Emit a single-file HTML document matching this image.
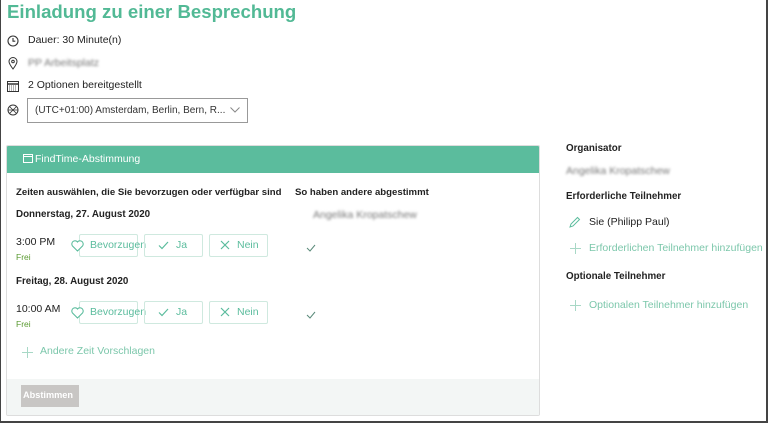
<!DOCTYPE html>
<html><head><meta charset="utf-8"><style>
*{margin:0;padding:0;box-sizing:border-box}
body{width:768px;height:423px;overflow:hidden;background:#fff;font-family:"Segoe UI","Liberation Sans",sans-serif;font-size:10.5px;color:#222;position:relative}
.frame{position:absolute;left:0;top:0;width:768px;height:423px;border-left:1px solid #444;border-right:2px solid #444;border-bottom:2px solid #444}
.a{position:absolute;white-space:nowrap}
h1{position:absolute;left:7px;top:1px;font-size:18.6px;font-weight:bold;color:#52b995}
.blur{filter:blur(1.3px);color:#777}
.card{position:absolute;left:6px;top:145px;width:534px;height:271px;border:1px solid #ddd;border-radius:2px;overflow:hidden}
.hdr{height:27px;background:#5bbc9d;color:#fff;font-size:10.5px;padding:7px 0 0 16px}
.foot{position:absolute;left:0;bottom:0;width:100%;height:36px;background:#f3f6f5}
.btn{position:absolute;height:23px;border:1px solid #cfe9df;border-radius:2px;color:#5bbc9d;font-size:10.5px;padding-top:4px}
.green{color:#5bbc9d}
.s{font-weight:bold;font-size:9.8px}
</style></head><body>
<h1>Einladung zu einer Besprechung</h1>
<svg class="a" style="left:7px;top:35px" width="12" height="12" viewBox="0 0 12 12"><circle cx="6" cy="6" r="5" fill="none" stroke="#333" stroke-width="1.1"/><path d="M6 3v3.2h2.3" fill="none" stroke="#333" stroke-width="1.1"/></svg>
<div class="a" style="left:28px;top:34px">Dauer: 30 Minute(n)</div>
<svg class="a" style="left:8px;top:57px" width="10" height="13" viewBox="0 0 10 13"><path d="M5 12C2 8 1 6 1 4.5a4 4 0 0 1 8 0C9 6 8 8 5 12z" fill="none" stroke="#333"/><circle cx="5" cy="4.5" r="1.3" fill="none" stroke="#333"/></svg>
<div class="a blur" style="left:28px;top:57px">PP Arbeitsplatz</div>
<svg class="a" style="left:7px;top:80px" width="12" height="12" viewBox="0 0 12 12"><rect x="0.5" y="1.5" width="11" height="10" fill="none" stroke="#333"/><path d="M0.5 4h11" stroke="#333" stroke-width="1.5"/><path d="M2 6h8M2 8h8M2 10h8" stroke="#333" stroke-width=".7" stroke-dasharray="1 1"/></svg>
<div class="a" style="left:28px;top:79px">2 Optionen bereitgestellt</div>
<svg class="a" style="left:7px;top:104px" width="12" height="12" viewBox="0 0 12 12"><circle cx="6" cy="6" r="5" fill="none" stroke="#333"/><path d="M3 3l6 6M9 3L3 9M1 6h10" stroke="#333" stroke-width=".8"/></svg>
<div class="a" style="left:27px;top:98px;width:221px;height:25px;border:1px solid #999;padding:6px 0 0 7px;color:#333;font-size:10px">(UTC+01:00) Amsterdam, Berlin, Bern, R...</div>
<svg class="a" style="left:230px;top:107px" width="10" height="6" viewBox="0 0 10 6"><path d="M0.5 0.5l4.5 4.5 4.5-4.5" fill="none" stroke="#888"/></svg>

<div class="card">
<div class="hdr"><svg style="vertical-align:-1px;margin-right:2px" width="10" height="10" viewBox="0 0 10 10"><rect x=".5" y="1.5" width="9" height="8" fill="none" stroke="#fff"/><path d="M.5 3.5h9" stroke="#fff"/></svg>FindTime-Abstimmung</div>
<div class="a s" style="left:9px;top:41px;font-size:9.6px">Zeiten auswählen, die Sie bevorzugen oder verfügbar sind</div>
<div class="a s" style="left:288px;top:41px;font-size:9.6px">So haben andere abgestimmt</div>
<div class="a s" style="left:9px;top:63px">Donnerstag, 27. August 2020</div>
<div class="a blur" style="left:306px;top:63px">Angelika Kropatschew</div>
<div class="a" style="left:9px;top:90px">3:00 PM</div>
<div class="a" style="left:9px;top:106px;font-size:8.5px;color:#5a9a30">Frei</div>
<div class="btn" style="left:72px;top:88px;width:59px;padding-left:10px">Bevorzugen</div>
<svg class="a" style="left:64px;top:94px" width="13" height="12" viewBox="0 0 13 12"><path d="M6.5 11L1.5 6A3 3 0 0 1 6.5 2 3 3 0 0 1 11.5 6z" fill="#fff" stroke="#5bbc9d" stroke-width="1.1"/></svg>
<div class="btn" style="left:137px;top:88px;width:59px;padding-left:31px">Ja</div>
<svg class="a" style="left:151px;top:95px" width="11" height="9" viewBox="0 0 11 9"><path d="M1 4.5l3 3L10 1" fill="none" stroke="#5bbc9d" stroke-width="1.2"/></svg>
<div class="btn" style="left:202px;top:88px;width:59px;padding-left:27px">Nein</div>
<svg class="a" style="left:213px;top:94px" width="10" height="10" viewBox="0 0 10 10"><path d="M1 1l8 8M9 1L1 9" stroke="#5bbc9d" stroke-width="1.2"/></svg>
<svg class="a" style="left:299px;top:98px" width="10" height="8" viewBox="0 0 10 8"><path d="M1 4l3 3L9 1" fill="none" stroke="#5a8a7a" stroke-width="1"/></svg>

<div class="a s" style="left:9px;top:130px">Freitag, 28. August 2020</div>
<div class="a" style="left:9px;top:157px">10:00 AM</div>
<div class="a" style="left:9px;top:173px;font-size:8.5px;color:#5a9a30">Frei</div>
<div class="btn" style="left:72px;top:155px;width:59px;padding-left:10px">Bevorzugen</div>
<svg class="a" style="left:64px;top:161px" width="13" height="12" viewBox="0 0 13 12"><path d="M6.5 11L1.5 6A3 3 0 0 1 6.5 2 3 3 0 0 1 11.5 6z" fill="#fff" stroke="#5bbc9d" stroke-width="1.1"/></svg>
<div class="btn" style="left:137px;top:155px;width:59px;padding-left:31px">Ja</div>
<svg class="a" style="left:151px;top:162px" width="11" height="9" viewBox="0 0 11 9"><path d="M1 4.5l3 3L10 1" fill="none" stroke="#5bbc9d" stroke-width="1.2"/></svg>
<div class="btn" style="left:202px;top:155px;width:59px;padding-left:27px">Nein</div>
<svg class="a" style="left:213px;top:161px" width="10" height="10" viewBox="0 0 10 10"><path d="M1 1l8 8M9 1L1 9" stroke="#5bbc9d" stroke-width="1.2"/></svg>
<svg class="a" style="left:299px;top:165px" width="10" height="8" viewBox="0 0 10 8"><path d="M1 4l3 3L9 1" fill="none" stroke="#5a8a7a" stroke-width="1"/></svg>

<svg class="a" style="left:15px;top:201px" width="11" height="11" viewBox="0 0 11 11"><path d="M5.5 0v11M0 5.5h11" stroke="#a8d8c6"/></svg>
<div class="a" style="left:33px;top:199px;color:#7cc7ab">Andere Zeit Vorschlagen</div>
<div class="foot"><div class="a" style="left:14px;top:6px;width:58px;height:22px;background:#c8c6c4;color:#fff;font-weight:bold;font-size:9.2px;padding:5px 0 0 2px">Abstimmen</div></div>
</div>

<div class="a s" style="left:566px;top:143px">Organisator</div>
<div class="a blur" style="left:566px;top:165px">Angelika Kropatschew</div>
<div class="a s" style="left:566px;top:191px">Erforderliche Teilnehmer</div>
<svg class="a" style="left:569px;top:216px" width="12" height="12" viewBox="0 0 12 12"><path d="M1 11l1-3 6.5-6.5 2 2L4 10z" fill="none" stroke="#5bbc9d"/></svg>
<div class="a" style="left:589px;top:216px">Sie (Philipp Paul)</div>
<svg class="a" style="left:570px;top:243px" width="11" height="11" viewBox="0 0 11 11"><path d="M5.5 0v11M0 5.5h11" stroke="#a8d8c6"/></svg>
<div class="a" style="left:589px;top:242px;color:#7cc7ab">Erforderlichen Teilnehmer hinzufügen</div>
<div class="a s" style="left:566px;top:271px">Optionale Teilnehmer</div>
<svg class="a" style="left:570px;top:300px" width="11" height="11" viewBox="0 0 11 11"><path d="M5.5 0v11M0 5.5h11" stroke="#a8d8c6"/></svg>
<div class="a" style="left:589px;top:299px;color:#7cc7ab">Optionalen Teilnehmer hinzufügen</div>
<div class="frame"></div>
</body></html>
